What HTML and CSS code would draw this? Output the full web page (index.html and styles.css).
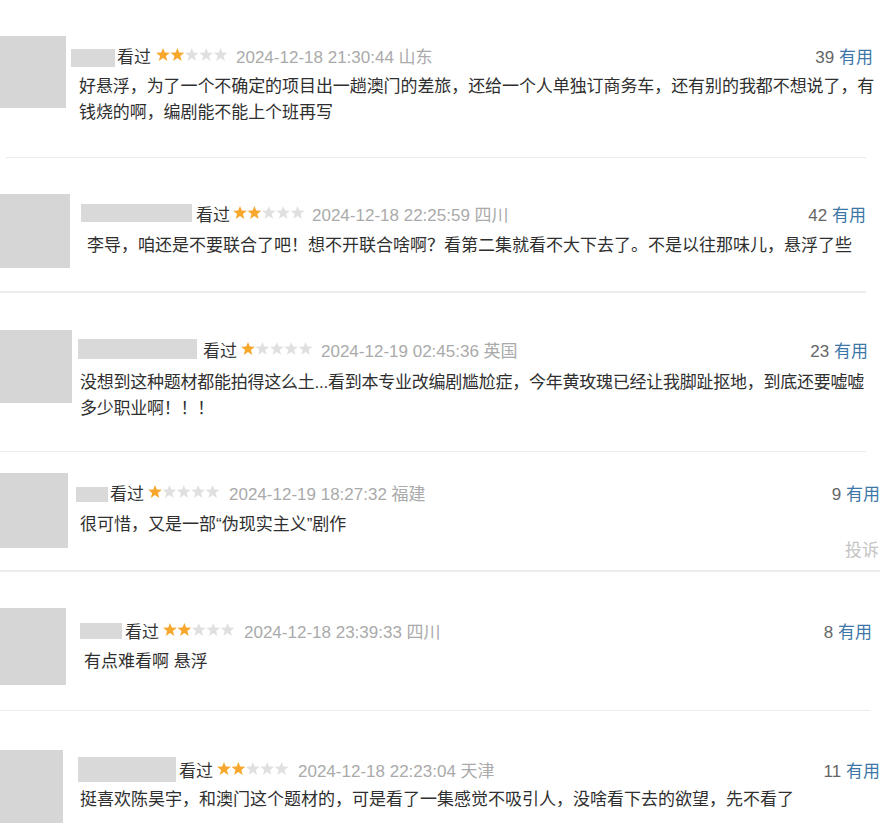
FILE: index.html
```html
<!DOCTYPE html>
<html lang="zh-CN">
<head>
<meta charset="utf-8">
<title>短评</title>
<link rel="stylesheet" href="styles.css">
</head>
<body>
<svg class="defs" width="0" height="0" aria-hidden="true">
  <defs>
    <polygon id="star" points="7,0 8.8,4.6 13.9,4.8 9.9,7.9 11.3,13 7,10.1 2.7,13 4.1,7.9 0.1,4.8 5.2,4.6"/>
  </defs>
</svg>

<div class="list">
  <div class="item c1">
    <div class="avatar"></div>
    <div class="main">
      <div class="head">
        <span class="name"></span>
        <span class="watched">看过</span>
        <svg class="stars" width="72" height="14" viewBox="0 0 72 14"><use href="#star" class="on"/><use href="#star" x="14.4" class="on"/><use href="#star" x="28.8" class="off"/><use href="#star" x="43.2" class="off"/><use href="#star" x="57.6" class="off"/></svg>
        <span class="time">2024-12-18 21:30:44 山东</span>
        <span class="votes"><span class="count">39</span> <span class="useful">有用</span></span>
      </div>
      <p class="text">好悬浮，为了一个不确定的项目出一趟澳门的差旅，还给一个人单独订商务车，还有别的我都不想说了，有<br>钱烧的啊，编剧能不能上个班再写</p>
    </div>
  </div>
  <div class="sep s1"></div>

  <div class="item c2">
    <div class="avatar"></div>
    <div class="main">
      <div class="head">
        <span class="name"></span>
        <span class="watched">看过</span>
        <svg class="stars" width="72" height="14" viewBox="0 0 72 14"><use href="#star" class="on"/><use href="#star" x="14.4" class="on"/><use href="#star" x="28.8" class="off"/><use href="#star" x="43.2" class="off"/><use href="#star" x="57.6" class="off"/></svg>
        <span class="time">2024-12-18 22:25:59 四川</span>
        <span class="votes"><span class="count">42</span> <span class="useful">有用</span></span>
      </div>
      <p class="text">李导，咱还是不要联合了吧！想不开联合啥啊？看第二集就看不大下去了。不是以往那味儿，悬浮了些</p>
    </div>
  </div>
  <div class="sep s2"></div>

  <div class="item c3">
    <div class="avatar"></div>
    <div class="main">
      <div class="head">
        <span class="name"></span>
        <span class="watched">看过</span>
        <svg class="stars" width="72" height="14" viewBox="0 0 72 14"><use href="#star" class="on"/><use href="#star" x="14.4" class="off"/><use href="#star" x="28.8" class="off"/><use href="#star" x="43.2" class="off"/><use href="#star" x="57.6" class="off"/></svg>
        <span class="time">2024-12-19 02:45:36 英国</span>
        <span class="votes"><span class="count">23</span> <span class="useful">有用</span></span>
      </div>
      <p class="text">没想到这种题材都能拍得这么土...看到本专业改编剧尴尬症，今年黄玫瑰已经让我脚趾抠地，到底还要嘘嘘<br>多少职业啊！！！</p>
    </div>
  </div>
  <div class="sep s3"></div>

  <div class="item c4">
    <div class="avatar"></div>
    <div class="main">
      <div class="head">
        <span class="name"></span>
        <span class="watched">看过</span>
        <svg class="stars" width="72" height="14" viewBox="0 0 72 14"><use href="#star" class="on"/><use href="#star" x="14.4" class="off"/><use href="#star" x="28.8" class="off"/><use href="#star" x="43.2" class="off"/><use href="#star" x="57.6" class="off"/></svg>
        <span class="time">2024-12-19 18:27:32 福建</span>
        <span class="votes"><span class="count">9</span> <span class="useful">有用</span></span>
      </div>
      <p class="text">很可惜，又是一部“伪现实主义”剧作</p>
      <div class="report">投诉</div>
    </div>
  </div>
  <div class="sep s4"></div>

  <div class="item c5">
    <div class="avatar"></div>
    <div class="main">
      <div class="head">
        <span class="name"></span>
        <span class="watched">看过</span>
        <svg class="stars" width="72" height="14" viewBox="0 0 72 14"><use href="#star" class="on"/><use href="#star" x="14.4" class="on"/><use href="#star" x="28.8" class="off"/><use href="#star" x="43.2" class="off"/><use href="#star" x="57.6" class="off"/></svg>
        <span class="time">2024-12-18 23:39:33 四川</span>
        <span class="votes"><span class="count">8</span> <span class="useful">有用</span></span>
      </div>
      <p class="text">有点难看啊 悬浮</p>
    </div>
  </div>
  <div class="sep s5"></div>

  <div class="item c6">
    <div class="avatar"></div>
    <div class="main">
      <div class="head">
        <span class="name"></span>
        <span class="watched">看过</span>
        <svg class="stars" width="72" height="14" viewBox="0 0 72 14"><use href="#star" class="on"/><use href="#star" x="14.4" class="on"/><use href="#star" x="28.8" class="off"/><use href="#star" x="43.2" class="off"/><use href="#star" x="57.6" class="off"/></svg>
        <span class="time">2024-12-18 22:23:04 天津</span>
        <span class="votes"><span class="count">11</span> <span class="useful">有用</span></span>
      </div>
      <p class="text">挺喜欢陈昊宇，和澳门这个题材的，可是看了一集感觉不吸引人，没啥看下去的欲望，先不看了</p>
    </div>
  </div>
</div>
</body>
</html>
```

FILE: styles.css
```css
html, body {
  margin: 0;
  padding: 0;
  background: #fff;
}

body {
  font-family: "Liberation Sans", "Noto Sans CJK SC", sans-serif;
  font-size: 17px;
  color: #333;
  overflow: hidden;
}

.defs {
  position: absolute;
  width: 0;
  height: 0;
}

.list {
  display: flex;
  flex-direction: column;
}

.item {
  display: flex;
  align-items: flex-start;
}

.avatar {
  flex: none;
  background: #d6d6d6;
}

.main {
  flex: 1;
  min-width: 0;
}

.head {
  display: flex;
  align-items: center;
  height: 26px;
  white-space: nowrap;
}

.name {
  flex: none;
  background: #d9d9d9;
}

.watched {
  color: #333;
}

.stars {
  flex: none;
  margin: 0 0 1px 4px;
}

.stars .on {
  fill: #f6a72c;
}

.stars .off {
  fill: #e0e0e0;
}

.time {
  color: #aaa;
  margin-left: 8px;
}

.votes {
  margin-left: auto;
}

.count {
  color: #666;
}

.useful {
  color: #3d77a8;
}

.text {
  margin: 0;
  line-height: 26px;
  white-space: nowrap;
  color: #2f2f2f;
}

.report {
  text-align: right;
  color: #c4c4c4;
  line-height: 26px;
  padding-right: 1px;
}

.sep {
  height: 1px;
  background: #ececec;
}

/* block 1 */
.c1 { padding-right: 10px; }
.c1 .avatar { width: 66px; height: 72px; margin-top: 36px; }
.c1 .main { margin: 42px 0 0 5px; }
.c1 .name { width: 44px; height: 18px; margin-top: 6px; margin-right: 2px; }
.c1 .stars { margin-left: 5px; }
.c1 .text { margin-top: 6px; padding-left: 8px; letter-spacing: -0.08px; }
.s1 { margin: 31px 17px 0 6px; }

/* block 2 */
.c2 { padding-right: 17px; }
.c2 .avatar { width: 70px; height: 74px; margin-top: 36px; }
.c2 .main { margin: 42px 0 0 11px; }
.c2 .name { width: 111px; height: 18px; margin-right: 4px; }
.c2 .stars { margin-left: 3px; }
.c2 .time { margin-left: 7px; }
.c2 .text { margin-top: 7px; padding-left: 6px; }
.s2 { margin: 23px 17px 0 0; height: 2px; }

/* block 3 */
.c3 { padding-right: 15px; }
.c3 .avatar { width: 72px; height: 73px; margin-top: 37px; }
.c3 .main { margin: 43px 0 0 6px; }
.c3 .name { width: 119px; height: 20px; margin-right: 6px; }
.c3 .text { margin-top: 8px; padding-left: 2px; letter-spacing: -0.25px; }
.s3 { margin: 29px 17px 0 0; }

/* block 4 */
.c4 { padding-right: 3px; }
.c4 .avatar { width: 68px; height: 75px; margin-top: 21px; }
.c4 .main { margin: 27px 0 0 8px; }
.c4 .name { width: 32px; height: 15px; margin-top: 4px; margin-right: 2px; }
.c4 .time { margin-left: 9px; }
.c4 .text { margin-top: 7px; padding-left: 4px; }
.s4 { margin: 6px 3px 0 0; height: 2px; }

/* block 5 */
.c5 { padding-right: 11px; }
.c5 .avatar { width: 66px; height: 77px; margin-top: 36px; }
.c5 .main { margin: 45px 0 0 14px; }
.c5 .name { width: 42px; height: 16px; margin-top: 2px; margin-right: 3px; }
.c5 .time { margin-left: 9px; }
.c5 .text { margin-top: 6px; padding-left: 4px; }
.s5 { margin: 25px 13px 0 0; }

/* block 6 */
.c6 { padding-right: 3px; }
.c6 .avatar { width: 63px; height: 73px; margin-top: 39px; }
.c6 .main { margin: 45px 0 0 15px; }
.c6 .name { width: 98px; height: 25px; margin-right: 3px; }
.c6 .time { margin-left: 9px; }
.c6 .text { margin-top: 5px; padding-left: 2px; }
```
